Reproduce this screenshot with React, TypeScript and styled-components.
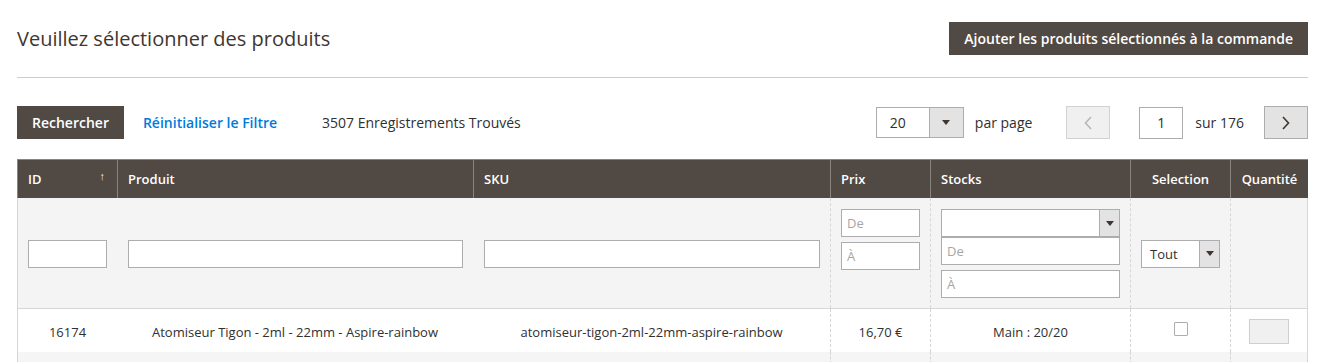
import React from 'react';
import styled, { createGlobalStyle } from 'styled-components';

const GlobalStyle = createGlobalStyle`
  html, body {
    margin: 0;
    padding: 0;
    background: #fff;
    font-family: 'Open Sans', 'Liberation Sans', sans-serif;
    color: #303030;
  }
  * { box-sizing: border-box; }
`;

const Page = styled.div`
  width: 1334px;
  padding: 22px 26px 0 17px;
`;

const PageHeader = styled.div`
  display: flex;
  align-items: center;
  justify-content: space-between;
  padding-bottom: 22px;
  border-bottom: 1px solid #cccccc;
`;

const Title = styled.h2`
  margin: 0;
  font-size: 20px;
  font-weight: 400;
  color: #41362f;
  line-height: 33px;
`;

const DarkButton = styled.button`
  height: 33px;
  padding: 0 14px;
  background: #514943;
  border: 1px solid #514943;
  color: #fff;
  font-family: inherit;
  font-size: 14px;
  font-weight: 600;
  cursor: pointer;
  white-space: nowrap;
`;

const Toolbar = styled.div`
  display: flex;
  align-items: center;
  margin-top: 28px;
  height: 33px;
`;

const LinkButton = styled.button`
  background: none;
  border: none;
  padding: 0;
  margin-left: 19px;
  font-family: inherit;
  font-size: 14px;
  font-weight: 600;
  color: #007bdb;
  cursor: pointer;
`;

const Count = styled.span`
  margin-left: 45px;
  font-size: 14px;
  color: #303030;
`;

const Spacer = styled.div`
  flex: 1;
`;

const Label = styled.span<{ $ml?: number; $mr?: number }>`
  margin-left: ${({ $ml }) => $ml ?? 0}px;
  margin-right: ${({ $mr }) => $mr ?? 0}px;
  font-size: 14px;
  color: #303030;
  white-space: nowrap;
`;

const SelectBox = styled.div<{ $w: number; $h: number; $arrow: number }>`
  display: flex;
  width: ${({ $w }) => $w}px;
  height: ${({ $h }) => $h}px;
  border: 1px solid #adadad;
  background: #fff;
  font-size: ${({ $h }) => ($h > 29 ? 14 : 13)}px;
  color: #303030;

  & > span {
    flex: 1;
    display: flex;
    align-items: center;
    padding-left: ${({ $h }) => ($h > 29 ? 13 : 8)}px;
  }

  & > i {
    width: ${({ $arrow }) => $arrow}px;
    border-left: 1px solid #adadad;
    background: #e3e3e3;
    display: flex;
    align-items: center;
    justify-content: center;
  }

  & > i::after {
    content: '';
    border-left: 4px solid transparent;
    border-right: 4px solid transparent;
    border-top: 5px solid #41362f;
  }
`;

const PagerButton = styled.button<{ $disabled?: boolean }>`
  width: 44px;
  height: 33px;
  padding: 0;
  display: flex;
  align-items: center;
  justify-content: center;
  border: 1px solid ${({ $disabled }) => ($disabled ? '#d1d1d1' : '#adadad')};
  background: ${({ $disabled }) => ($disabled ? '#f0f0f0' : '#e3e3e3')};
  cursor: pointer;
`;

const PageInput = styled.div`
  width: 44px;
  height: 32px;
  margin-left: 29px;
  border: 1px solid #adadad;
  background: #fff;
  display: flex;
  align-items: center;
  justify-content: center;
  font-size: 14px;
`;

const Grid = styled.div`
  margin-top: 20px;
  width: 1291px;
`;

const COLS = '100px 356px 357px 100px 200px 100px 78px';
// rows with a 1px frame on each side
const INNER_COLS = '99px 356px 357px 100px 200px 100px 77px';

const HeadRow = styled.div`
  display: grid;
  grid-template-columns: ${COLS};
  height: 39px;
  background: #514943;
  border-top: 1px solid #8a837f;
`;

const HeadCell = styled.div<{ $center?: boolean }>`
  position: relative;
  display: flex;
  align-items: center;
  justify-content: ${({ $center }) => ($center ? 'center' : 'flex-start')};
  padding: 0 10px;
  border-left: 1px solid #8a837f;
  color: #fff;
  font-size: 13px;
  font-weight: 600;
  white-space: nowrap;
`;

const SortMark = styled.span`
  position: absolute;
  right: 12px;
  top: 8px;
  font-size: 11px;
  font-weight: 400;
  color: #ece8e4;
`;

const FilterRow = styled.div`
  display: grid;
  grid-template-columns: ${INNER_COLS};
  background: #f4f4f4;
  border-left: 1px solid #d6d6d6;
  border-right: 1px solid #d6d6d6;
`;

const FilterCell = styled.div<{ $dashed?: boolean; $top?: boolean }>`
  display: flex;
  flex-direction: column;
  justify-content: ${({ $top }) => ($top ? 'flex-start' : 'center')};
  padding: 11px 10px 10px;
  border-left: ${({ $dashed }) => ($dashed ? '1px dashed #d6d6d6' : '1px solid transparent')};
  min-height: 110px;

  &:first-child {
    border-left: 0;
  }
`;

const TextInput = styled.div<{ $mt?: number; $h?: number }>`
  height: ${({ $h }) => $h ?? 28}px;
  margin-top: ${({ $mt }) => $mt ?? 0}px;
  border: 1px solid #adadad;
  background: #fff;
  display: flex;
  align-items: center;
  padding-left: 5px;
  font-size: 13px;
  color: #a6a6a6;
`;

const DataRow = styled.div<{ $stripe?: boolean; $h: number }>`
  display: grid;
  grid-template-columns: ${INNER_COLS};
  height: ${({ $h }) => $h}px;
  background: ${({ $stripe }) => ($stripe ? '#f5f5f5' : '#fff')};
  border-top: ${({ $stripe }) => ($stripe ? '0' : '1px solid #d6d6d6')};
  border-left: 1px solid #d6d6d6;
  border-right: 1px solid #d6d6d6;
`;

const DataCell = styled.div<{ $dashed?: boolean }>`
  display: flex;
  align-items: center;
  justify-content: center;
  padding: 3px 10px 0;
  border-left: ${({ $dashed }) => ($dashed ? '1px dashed #d6d6d6' : '0')};
  font-size: 13px;
  color: #303030;
  white-space: nowrap;
`;

const Checkbox = styled.span`
  width: 14px;
  height: 14px;
  margin-top: -6px;
  border: 1px solid #adadad;
  background: #fff;
  border-radius: 1px;
`;

const QtyInput = styled.span`
  width: 40px;
  height: 25px;
  margin-top: -2px;
  border: 1px solid #cfcfcf;
  background: #f0f0f0;
`;

const Chevron: React.FC<{ dir: 'left' | 'right'; color: string }> = ({ dir, color }) => (
  <svg width="8" height="14" viewBox="0 0 8 14">
    <path
      d={dir === 'left' ? 'M7 1 L1.5 7 L7 13' : 'M1 1 L6.5 7 L1 13'}
      fill="none"
      stroke={color}
      strokeWidth="1.6"
    />
  </svg>
);

const App: React.FC = () => {
  return (
    <>
      <GlobalStyle />
      <Page>
        <PageHeader>
          <Title>Veuillez sélectionner des produits</Title>
          <DarkButton>Ajouter les produits sélectionnés à la commande</DarkButton>
        </PageHeader>

        <Toolbar>
          <DarkButton>Rechercher</DarkButton>
          <LinkButton>Réinitialiser le Filtre</LinkButton>
          <Count>3507 Enregistrements Trouvés</Count>
          <Spacer />
          <SelectBox $w={88} $h={31} $arrow={34}>
            <span>20</span>
            <i />
          </SelectBox>
          <Label $ml={11} $mr={34}>
            par page
          </Label>
          <PagerButton $disabled>
            <Chevron dir="left" color="#b7b7b7" />
          </PagerButton>
          <PageInput>1</PageInput>
          <Label $ml={12} $mr={20}>
            sur 176
          </Label>
          <PagerButton>
            <Chevron dir="right" color="#41362f" />
          </PagerButton>
        </Toolbar>

        <Grid>
          <HeadRow>
            <HeadCell>
              ID
              <SortMark>↑</SortMark>
            </HeadCell>
            <HeadCell>Produit</HeadCell>
            <HeadCell>SKU</HeadCell>
            <HeadCell>Prix</HeadCell>
            <HeadCell>Stocks</HeadCell>
            <HeadCell $center>Selection</HeadCell>
            <HeadCell $center>Quantité</HeadCell>
          </HeadRow>

          <FilterRow>
            <FilterCell>
              <TextInput />
            </FilterCell>
            <FilterCell>
              <TextInput />
            </FilterCell>
            <FilterCell>
              <TextInput />
            </FilterCell>
            <FilterCell $dashed $top>
              <TextInput>De</TextInput>
              <TextInput $mt={5}>À</TextInput>
            </FilterCell>
            <FilterCell $dashed>
              <SelectBox $w={179} $h={28} $arrow={20}>
                <span />
                <i />
              </SelectBox>
              <TextInput>De</TextInput>
              <TextInput $mt={5}>À</TextInput>
            </FilterCell>
            <FilterCell $dashed>
              <SelectBox $w={79} $h={28} $arrow={20}>
                <span>Tout</span>
                <i />
              </SelectBox>
            </FilterCell>
            <FilterCell $dashed />
          </FilterRow>

          <DataRow $h={44}>
            <DataCell>16174</DataCell>
            <DataCell>Atomiseur Tigon - 2ml - 22mm - Aspire-rainbow</DataCell>
            <DataCell>atomiseur-tigon-2ml-22mm-aspire-rainbow</DataCell>
            <DataCell $dashed>16,70 €</DataCell>
            <DataCell $dashed>Main : 20/20</DataCell>
            <DataCell $dashed>
              <Checkbox />
            </DataCell>
            <DataCell $dashed>
              <QtyInput />
            </DataCell>
          </DataRow>
          <DataRow $stripe $h={12}>
            <DataCell />
            <DataCell />
            <DataCell />
            <DataCell $dashed />
            <DataCell $dashed />
            <DataCell $dashed />
            <DataCell $dashed />
          </DataRow>
        </Grid>
      </Page>
    </>
  );
};

export default App;
